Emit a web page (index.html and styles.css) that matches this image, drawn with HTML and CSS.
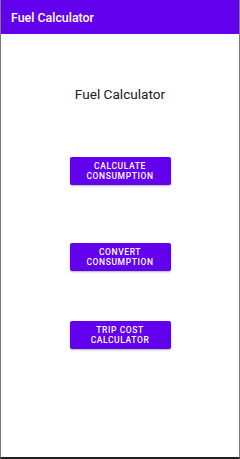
FILE: index.html
```html
<!DOCTYPE html>
<html>
<head>
<meta charset="utf-8">
<link rel="stylesheet" href="styles.css">
</head>
<body>
<div class="screen">
  <header class="appbar">Fuel Calculator</header>
  <main class="content">
    <h1 class="title">Fuel Calculator</h1>
    <button class="btn btn-first">Calculate<br>Consumption</button>
    <button class="btn btn-second">Convert<br>Consumption</button>
    <button class="btn btn-third">Trip Cost<br>Calculator</button>
  </main>
</div>
</body>
</html>
```
FILE: styles.css
```css
html, body {
  margin: 0;
  padding: 0;
  background: #fff;
}
.screen {
  box-sizing: border-box;
  width: 240px;
  height: 459px;
  border-left: 1px solid #7a7a7a;
  border-right: 1px solid #7a7a7a;
  border-bottom: 2px solid #1e1e1e;
  display: flex;
  flex-direction: column;
  font-family: Roboto, "Noto Sans", sans-serif;
  overflow: hidden;
}
.appbar {
  height: 34px;
  background: #6200ee;
  color: #fff;
  font-size: 12.4px;
  font-weight: 500;
  line-height: 35px;
  padding-left: 10px;
  flex-shrink: 0;
}
.content {
  display: flex;
  flex-direction: column;
  align-items: center;
}
.title {
  margin: 51px 0 0;
  font-size: 13.6px;
  font-weight: 400;
  color: #202020;
  line-height: 18px;
}
.btn {
  width: 101px;
  height: 28px;
  border: none;
  border-radius: 2px;
  background: #6200ee;
  color: #fff;
  font-family: Roboto, "Noto Sans", sans-serif;
  font-size: 8.5px;
  font-weight: 500;
  letter-spacing: 0.6px;
  line-height: 10px;
  text-transform: uppercase;
  padding: 0;
  box-shadow: 0 1px 2px rgba(0,0,0,0.3);
}
.btn-first { margin-top: 54px; }
.btn-second { margin-top: 58px; }
.btn-third { margin-top: 50px; }
```
